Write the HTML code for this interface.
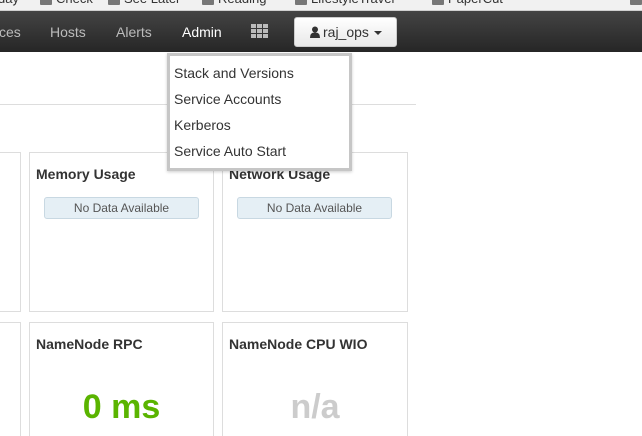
<html><head><style>
*{box-sizing:border-box}
html,body{margin:0;width:642px;height:436px;overflow:hidden}
body{background:#fff;font-family:"Liberation Sans",sans-serif;position:relative}
.a{position:absolute}
.bm{top:0;left:0;width:642px;height:11px;background:#f1f1f1;border-bottom:1px solid #d0d0d0;overflow:hidden}
.bm span{position:absolute;top:-9px;font-size:13px;color:#333}
.bm i{position:absolute;top:-3px;width:12px;height:8px;background:#777;border-radius:1px}
.nav{top:11px;left:0;width:642px;height:41px;background:linear-gradient(#444,#262626)}
.nav .t{position:absolute;top:13px;font-size:14px;color:#bbb}
.card{border:1px solid #ddd;background:#fff}
.card h4{margin:0;position:absolute;left:6px;top:13px;font-size:14px;font-weight:bold;color:#333}
.nd{position:absolute;top:44px;left:14px;width:155px;height:22px;background:#e5eff5;border:1px solid #c8d8e2;border-radius:3px;font-size:12px;color:#555;text-align:center;line-height:20px}
.dd{left:167px;top:53px;width:185px;height:118px;background:#fff;border:3px solid #c6c6c6;box-shadow:0 1px 3px rgba(0,0,0,.2)}
.dd div{position:absolute;left:4px;font-size:14px;color:#333}
</style></head><body>
<div class="a bm">
<span style="left:-2px">day</span>
<i style="left:40px"></i><span style="left:56px">Check</span>
<i style="left:108px"></i><span style="left:124px">See Later</span>
<i style="left:202px"></i><span style="left:218px">Reading</span>
<i style="left:295px"></i><span style="left:311px">LifestyleTravel</span>
<i style="left:432px"></i><span style="left:448px">PaperCut</span>
<i style="left:630px"></i>
</div>
<div class="a nav">
<span class="t" style="left:-1px">ces</span>
<span class="t" style="left:50px">Hosts</span>
<span class="t" style="left:116px">Alerts</span>
<span class="t" style="left:182px;color:#fff">Admin</span>
<svg class="a" style="left:251px;top:13px" width="18" height="15"><g fill="#bbb"><rect x="0" y="0" width="5" height="4"/><rect x="6" y="0" width="5" height="4"/><rect x="12" y="0" width="5" height="4"/><rect x="0" y="5" width="5" height="4"/><rect x="6" y="5" width="5" height="4"/><rect x="12" y="5" width="5" height="4"/><rect x="0" y="10" width="5" height="4"/><rect x="6" y="10" width="5" height="4"/><rect x="12" y="10" width="5" height="4"/></g></svg>
<div class="a" style="left:294px;top:6px;width:103px;height:30px;background:linear-gradient(#fff,#e8e8e8);border:1px solid #ccc;border-radius:3px"></div>
<svg class="a" style="left:310px;top:15px" width="10" height="12"><circle cx="5" cy="3.5" r="3" fill="#333"/><path d="M0 12 Q0 6 5 6.5 Q10 6 10 12Z" fill="#333"/></svg>
<span class="t" style="left:323px;color:#333">raj_ops</span>
<svg class="a" style="left:374px;top:20px" width="8" height="5"><path d="M0 0H8L4 4Z" fill="#333"/></svg>
</div>
<div class="a" style="left:0;top:104px;width:416px;height:1px;background:#ddd"></div>
<div class="a card" style="left:-10px;top:152px;width:31px;height:160px"></div>
<div class="a card" style="left:29px;top:152px;width:185px;height:160px"><h4>Memory Usage</h4><div class="nd">No Data Available</div></div>
<div class="a card" style="left:222px;top:152px;width:186px;height:160px"><h4>Network Usage</h4><div class="nd">No Data Available</div></div>
<div class="a card" style="left:-10px;top:322px;width:31px;height:130px"></div>
<div class="a card" style="left:29px;top:322px;width:185px;height:130px"><h4>NameNode RPC</h4><div class="a" style="left:0;width:183px;top:65px;text-align:center;font-size:34px;font-weight:bold;color:#5ab400">0 ms</div></div>
<div class="a card" style="left:222px;top:322px;width:186px;height:130px"><h4>NameNode CPU WIO</h4><div class="a" style="left:0;width:184px;top:65px;text-align:center;font-size:34px;font-weight:bold;color:#ccc">n/a</div></div>
<div class="a dd">
<div style="top:9px">Stack and Versions</div>
<div style="top:35px">Service Accounts</div>
<div style="top:61px">Kerberos</div>
<div style="top:87px">Service Auto Start</div>
</div>
</body></html>
